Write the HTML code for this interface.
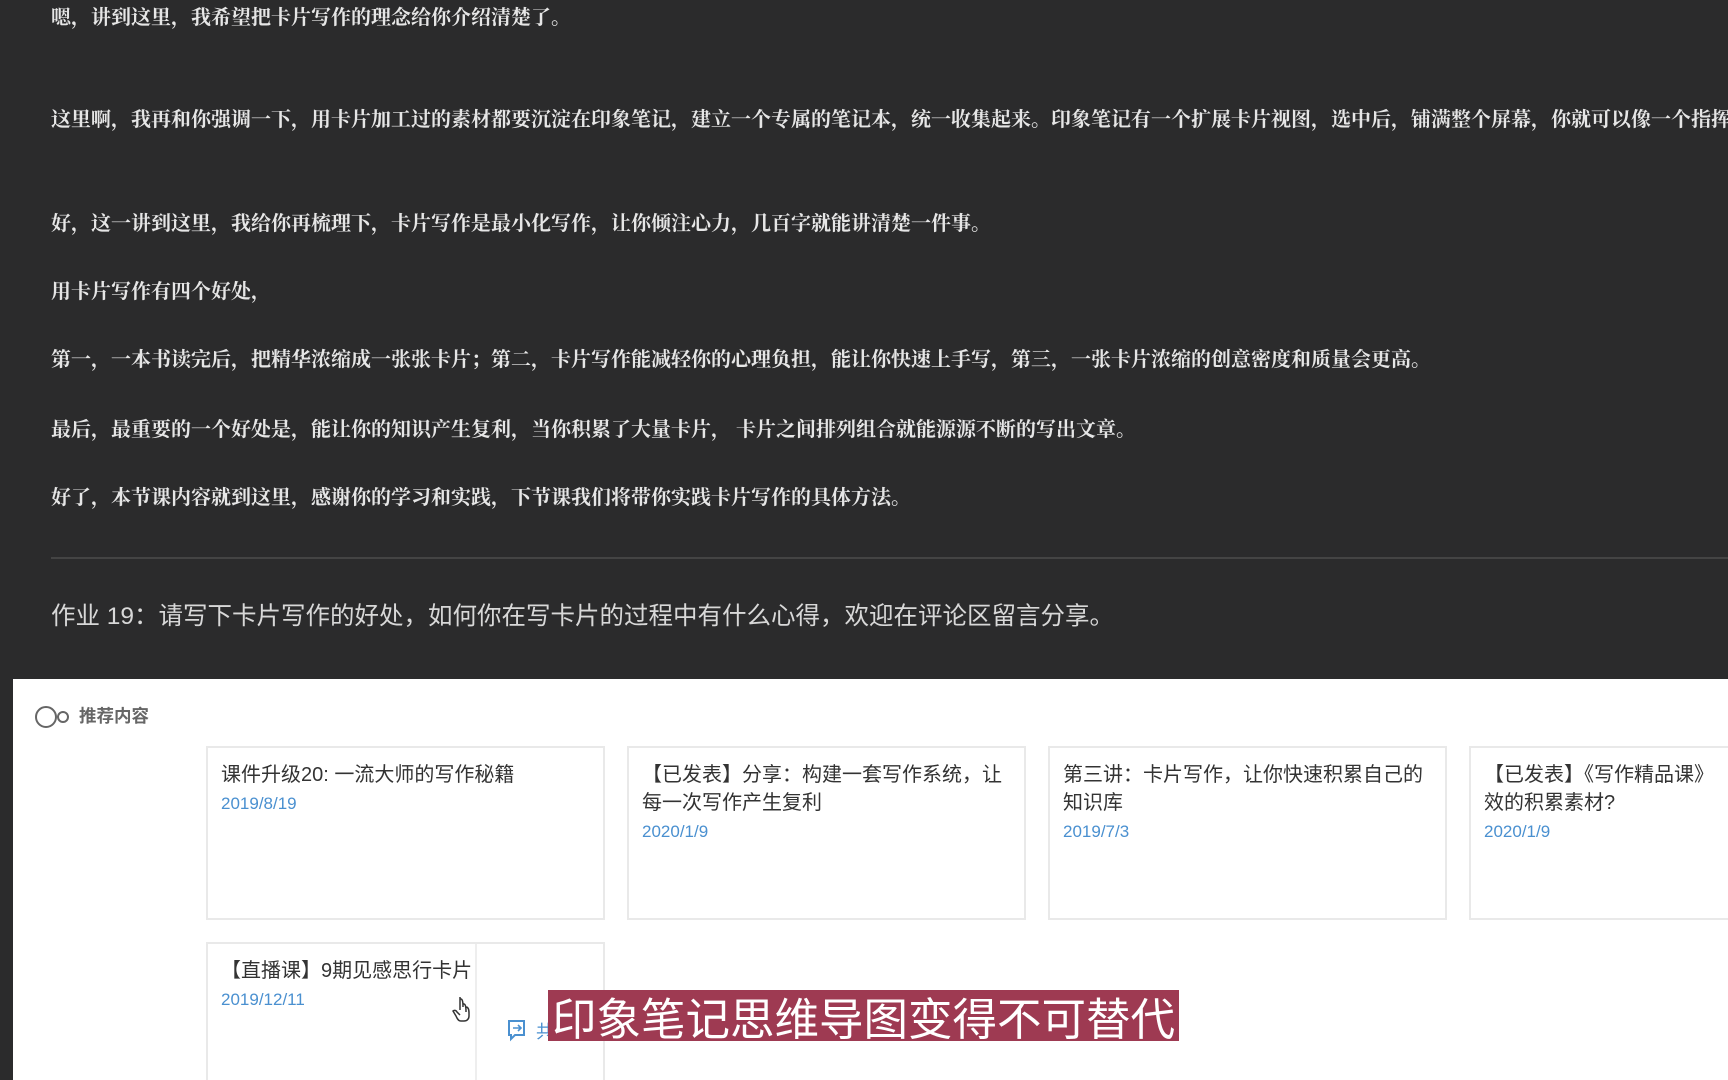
<!DOCTYPE html>
<html style="width:1728px;height:1080px;overflow:hidden;background:#2b2b2c"><head><meta charset="utf-8"><style>
*{margin:0;padding:0;box-sizing:border-box}
body{width:1728px;height:1080px;overflow:hidden;background:#2b2b2c;position:relative;font-family:"Liberation Sans","Noto Sans CJK SC",sans-serif}
.p{position:absolute;left:51px;color:#e6e6e6;font-family:"Liberation Serif","Noto Serif CJK SC",serif;font-weight:bold;font-size:20px;white-space:nowrap;line-height:24px}
.hr{position:absolute;left:51px;right:0;top:557px;height:2px;background:#444}
.hw{position:absolute;left:51px;top:602px;color:#d8d8d8;font-size:24.5px;white-space:nowrap;line-height:30px}
.panel{position:absolute;left:13px;top:679px;width:1715px;height:420px;background:#fff}
.card{position:absolute;background:#fff;border:2px solid #e9e9e9}
.t{position:absolute;left:13px;top:13px;font-size:20px;color:#333;line-height:28px;white-space:nowrap}
.d{color:#4a90d0;font-size:17px;line-height:29px}
.sub{position:absolute;left:548px;top:990px;width:631px;height:51px;background:#9e3a52;color:#fff;font-size:44.5px;line-height:51px;text-align:center;white-space:nowrap;font-family:"Noto Sans CJK SC",sans-serif}
</style></head><body>
<div class="p" style="top:6px">嗯，讲到这里，我希望把卡片写作的理念给你介绍清楚了。</div>
<div class="p" style="top:108px">这里啊，我再和你强调一下，用卡片加工过的素材都要沉淀在印象笔记，建立一个专属的笔记本，统一收集起来。印象笔记有一个扩展卡片视图，选中后，铺满整个屏幕，你就可以像一个指挥</div>
<div class="p" style="top:212px">好，这一讲到这里，我给你再梳理下，卡片写作是最小化写作，让你倾注心力，几百字就能讲清楚一件事。</div>
<div class="p" style="top:280px">用卡片写作有四个好处，</div>
<div class="p" style="top:348px">第一，一本书读完后，把精华浓缩成一张张卡片；第二，卡片写作能减轻你的心理负担，能让你快速上手写，第三，一张卡片浓缩的创意密度和质量会更高。</div>
<div class="p" style="top:418px">最后，最重要的一个好处是，能让你的知识产生复利，当你积累了大量卡片， 卡片之间排列组合就能源源不断的写出文章。</div>
<div class="p" style="top:486px">好了，本节课内容就到这里，感谢你的学习和实践，下节课我们将带你实践卡片写作的具体方法。</div>
<div class="hr"></div>
<div class="hw">作业 19：请写下卡片写作的好处，如何你在写卡片的过程中有什么心得，欢迎在评论区留言分享。</div>
<div class="panel"></div>
<svg style="position:absolute;left:34px;top:705px" width="38" height="24" viewBox="0 0 38 24"><circle cx="12" cy="12" r="10" fill="none" stroke="#666" stroke-width="2"/><circle cx="29" cy="12" r="5" fill="none" stroke="#666" stroke-width="2"/></svg>
<div style="position:absolute;left:79px;top:704px;font-size:17.5px;color:#666;line-height:24px;font-weight:bold">推荐内容</div>
<div class="card" style="left:206px;top:746px;width:399px;height:174px"><div class="t">课件升级20: 一流大师的写作秘籍<br><span class="d">2019/8/19</span></div></div>
<div class="card" style="left:627px;top:746px;width:399px;height:174px"><div class="t">【已发表】分享：构建一套写作系统，让<br>每一次写作产生复利<br><span class="d">2020/1/9</span></div></div>
<div class="card" style="left:1048px;top:746px;width:399px;height:174px"><div class="t">第三讲：卡片写作，让你快速积累自己的<br>知识库<br><span class="d">2019/7/3</span></div></div>
<div class="card" style="left:1469px;top:746px;width:300px;height:174px"><div class="t">【已发表】《写作精品课》<br>效的积累素材?<br><span class="d">2020/1/9</span></div></div>
<div class="card" style="left:206px;top:942px;width:399px;height:160px"><div class="t">【直播课】9期见感思行卡片<br><span class="d">2019/12/11</span></div><div style="position:absolute;left:267px;top:0;bottom:0;width:2px;background:#eee"></div></div>
<svg style="position:absolute;left:452px;top:995px" width="22" height="28" viewBox="0 0 22 28"><path d="M8 2v13M8 4c3-1 3 5 3 8M11 9c3-1 3 5 3 8M14 12c3 0 3 4 3 6v3c0 3-2 5-5 5H9c-3 0-4-3-5-5l-3-5c1-1 3-1 4 1l3 3" fill="none" stroke="#333" stroke-width="1.5"/></svg>
<svg style="position:absolute;left:506px;top:1018px" width="22" height="24" viewBox="0 0 22 24"><path d="M3 3h15v14H9l-4 4v-4H3z" fill="none" stroke="#4a90d0" stroke-width="2"/><path d="M7 10h8M12 7l3 3-3 3" fill="none" stroke="#4a90d0" stroke-width="1.6"/></svg>
<div style="position:absolute;left:536px;top:1018px;color:#4a90d0;font-size:18px">共</div>
<div class="sub">印象笔记思维导图变得不可替代</div>
</body></html>
